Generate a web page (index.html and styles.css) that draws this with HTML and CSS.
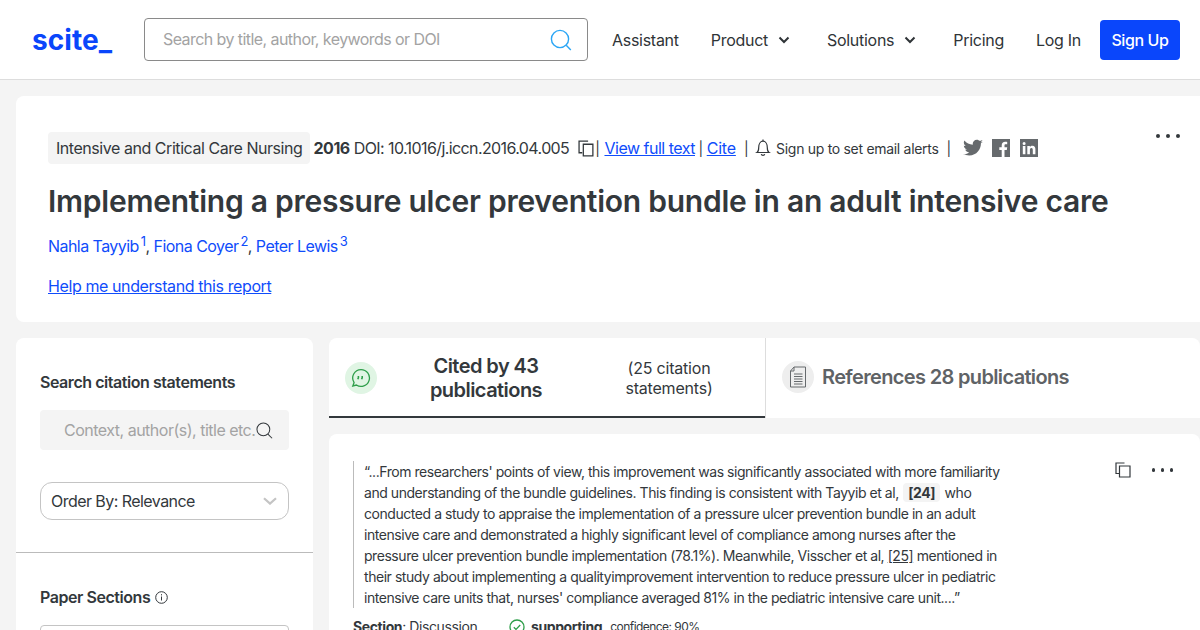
FILE: index.html
```html
<!DOCTYPE html>
<html lang="en">

<head>
    <meta charset="UTF-8">
    <title>Implementing a pressure ulcer prevention bundle in an adult intensive care</title>
    <link rel="stylesheet" href="styles.css">
</head>

<body>

    <header class="topbar">
        <a class="logo">scite_</a>
        <div class="search">
            <span class="search-text">Search by title, author, keywords or DOI</span>
            <svg class="search-icon" width="24" height="24" viewBox="0 0 24 24" fill="none" stroke="#2ba6f5" stroke-width="1.4">
                <circle cx="11" cy="11" r="8.6" />
                <path d="M17.2 17.2l4.6 4.8" />
            </svg>
        </div>
        <nav class="nav">
            <span class="nav-item">Assistant</span>
            <span class="nav-item">Product
                <svg class="chev" width="12" height="8" viewBox="0 0 12 8" fill="none" stroke="#2f3437" stroke-width="2">
                    <path d="M1.5 1.5L6 6l4.500-4.500" />
                </svg>
            </span>
            <span class="nav-item">Solutions
                <svg class="chev" width="12" height="8" viewBox="0 0 12 8" fill="none" stroke="#2f3437" stroke-width="2">
                    <path d="M1.500 1.500L6 6l4.500-4.500" />
                </svg>
            </span>
            <span class="nav-item">Pricing</span>
            <span class="nav-item nav-last">Log In</span>
            <span class="signup">Sign Up</span>
        </nav>
    </header>

    <section class="paper">
        <div class="meta">
            <span class="journal">Intensive and Critical Care Nursing</span>
            <b class="year">2016</b>
            <span class="doi">DOI: 10.1016/j.iccn.2016.04.005</span>
            <svg class="copy" width="17" height="17" viewBox="0 0 16 16" fill="none" stroke="#33383c" stroke-width="1.200">
                <path d="M9.500 1H1v11h3" />
                <path d="M5 4h9v11H5z" />
            </svg>
            <span class="sep sep-copy">|</span>
            <a class="link">View full text</a>
            <span class="sep">|</span>
            <a class="link link-cite">Cite</a>
            <span class="sep sep-wide">|</span>
            <svg class="bell" width="16" height="18" viewBox="0 0 16 18" fill="none" stroke="#33383c" stroke-width="1.200">
                <path d="M2 13.500c1.500-1 1.700-2.500 1.700-5C3.700 5 5.500 2.200 8 2.200s4.300 2.800 4.300 6.300c0 2.500.2 4 1.700 5z" />
                <path d="M8 .6v1.600M6.300 15.200c.3 1.600 3.100 1.600 3.400 0" />
            </svg>
            <span class="alerts">Sign up to set email alerts</span>
            <span class="sep sep-alerts">|</span>
            <svg class="social" width="20" height="18" viewBox="0 0 24 20" fill="#666a6d">
                <path d="M24 2.400c-.9.400-1.800.7-2.800.8 1-.6 1.800-1.600 2.200-2.700-1 .6-2 1-3.100 1.200C19.300.7 18 0 16.600 0c-2.700 0-4.900 2.200-4.900 4.900 0 .4 0 .8.100 1.100C7.700 5.800 4.100 3.900 1.700.9c-.4.700-.7 1.600-.7 2.500 0 1.700.9 3.200 2.200 4.100-.8 0-1.600-.2-2.200-.6v.1c0 2.400 1.700 4.400 3.900 4.800-.4.100-.8.200-1.300.2-.3 0-.6 0-.9-.1.600 2 2.400 3.400 4.600 3.400-1.700 1.300-3.800 2.100-6.100 2.100-.4 0-.8 0-1.200-.1C2.200 18.200 4.800 19 7.500 19c9.100 0 14-7.500 14-14v-.6c1-.7 1.800-1.600 2.500-2z" />
            </svg>
            <svg class="social social-fb" width="18" height="18" viewBox="0 0 18 18">
                <path fill="#666a6d" d="M0 0h18v18h-5.500v-7h2.300l.4-2.700h-2.700V6.600c0-.8.2-1.300 1.300-1.300h1.400V2.900c-.3 0-1.100-.1-2-.1-2.100 0-3.500 1.300-3.500 3.600v1.900H7.300V11h2.400v7H0z" />
            </svg>
            <svg class="social" width="18" height="18" viewBox="0 0 18 18">
                <path fill="#666a6d" fill-rule="evenodd" d="M0 0h18v18H0zM2.800 7v8.200h2.600V7zM4.100 2.900a1.500 1.500 0 100 3 1.500 1.500 0 000-3zM7.300 7v8.200h2.600v-4.100c0-1.100.2-2.100 1.500-2.100s1.400 1.200 1.400 2.200v4h2.600v-4.500c0-2.200-.5-3.900-3.100-3.900-1.200 0-2.100.7-2.400 1.300V7z" />
            </svg>
        </div>
        <span class="more more-paper"><i></i><i></i><i></i></span>
        <h1 class="title">Implementing a pressure ulcer prevention bundle in an adult intensive care</h1>
        <div class="authors">
            <a>Nahla Tayyib<sup>1</sup></a><span class="comma">,</span>
            <a>Fiona Coyer<sup>2</sup></a><span class="comma">,</span>
            <a>Peter Lewis<sup>3</sup></a>
        </div>
        <a class="link help">Help me understand this report</a>
    </section>

    <div class="columns">
        <aside class="sidebar">
            <div class="side-top">
                <h3 class="side-title">Search citation statements</h3>
                <div class="side-search">
                    <span>Context, author(s), title etc.</span>
                    <svg class="side-search-icon" width="17" height="17" viewBox="0 0 18 18" fill="none" stroke="#33383c" stroke-width="1.100">
                        <circle cx="7.800" cy="7.800" r="6.800" />
                        <path d="M12.600 12.800l4.400 4.400" />
                    </svg>
                </div>
                <div class="order">
                    <span>Order By: Relevance</span>
                    <svg width="14" height="8" viewBox="0 0 14 8" fill="none" stroke="#c4c4c4" stroke-width="2.200">
                        <path d="M1 1.200l6 5.400 6-5.400" />
                    </svg>
                </div>
            </div>
            <div class="side-bottom">
                <h3 class="side-title">Paper Sections
                    <svg class="info" width="13" height="13" viewBox="0 0 13 13" fill="none" stroke="#33383c">
                        <circle cx="6.500" cy="6.500" r="5.800" />
                        <path d="M6.500 5.500v4M6.500 3.200v1.200" />
                    </svg>
                </h3>
                <div class="side-box"></div>
            </div>
        </aside>

        <main class="results">
            <div class="tabs">
                <div class="tab tab-active">
                    <span class="tab-icon tab-icon-green">
                        <svg width="20" height="20" viewBox="0 0 20 20" fill="none" stroke="#2e9e4a" stroke-width="1.300">
                            <path d="M10 1.600a8.400 8.400 0 11-4.600 15.400L1.800 18l1.300-3.400A8.400 8.400 0 0110 1.600z" />
                            <path d="M7.400 8v1.800l-.6 1.400M11.200 8v1.800l-.6 1.400" stroke-width="1.600" />
                        </svg>
                    </span>
                    <span class="tab-title">Cited by 43 publications</span>
                    <span class="tab-sub">(25 citation statements)</span>
                </div>
                <div class="tab tab-refs">
                    <span class="tab-icon tab-icon-grey">
                        <svg width="18" height="22" viewBox="0 0 18 22" fill="none" stroke="#666a6d">
                            <path d="M5 1h11.500v20h-15V5z" />
                            <path d="M5 1v4H1.500M5 8h8.500M5 10.500h8.500M5 13h8.500M5 15.500h8.500M5 18h8.500" />
                        </svg>
                    </span>
                    <span class="refs-title">References 28 publications</span>
                </div>
            </div>

            <article class="citation">
                <div class="quote">
                    <p>“...From researchers' points of view, this improvement was significantly associated with more familiarity and understanding of the bundle guidelines. This finding is consistent with Tayyib et al, <b class="ref">[24]</b> who conducted a study to appraise the implementation of a pressure ulcer prevention bundle in an adult intensive care and demonstrated a highly significant level of compliance among nurses after the pressure ulcer prevention bundle implementation (78.1%). Meanwhile, Visscher et al, <u>[25]</u> mentioned in their study about implementing a qualityimprovement intervention to reduce pressure ulcer in pediatric intensive care units that, nurses' compliance averaged 81% in the pediatric intensive care unit....”</p>
                </div>
                <div class="cite-actions">
                    <svg width="16" height="16" viewBox="0 0 16 16" fill="none" stroke="#33383c" stroke-width="1.200">
                        <path d="M9.500 1H1v10.500h3" />
                        <path d="M4.500 4h10.500v11H4.500z" />
                    </svg>
                    <span class="more more-small"><i></i><i></i><i></i></span>
                </div>
                <div class="cite-foot">
                    <span class="section"><b>Section</b>: Discussion</span>
                    <svg class="check" width="16" height="16" viewBox="0 0 16 16" fill="none" stroke="#2e9e4a" stroke-width="1.300">
                        <circle cx="8" cy="8" r="7" />
                        <path d="M4.800 8.200l2.200 2.200 4.200-4.400" />
                    </svg>
                    <b class="supporting">supporting</b>
                    <span class="confidence">confidence: 90%</span>
                </div>
            </article>
        </main>
    </div>

</body>

</html>
```

FILE: styles.css
```css
* {
    margin: 0;
    padding: 0;
    box-sizing: border-box;
}

body {
    background: #f4f4f4;
    font-family: Inter, 'Liberation Sans', sans-serif;
    color: #33383c;
    height: 630px;
    overflow: hidden;
}

a {
    color: #0f4cfb;
}

/* Kopfzeile */
.topbar {
    display: flex;
    align-items: center;
    height: 80px;
    padding: 0 20px 0 32px;
    background: #fff;
    border-bottom: 1px solid #ddd;
}

.logo {
    flex: none;
    width: 112px;
    font-size: 28px;
    font-weight: 700;
    letter-spacing: 0.05px;
    color: #0a46fb;
}

.search {
    display: flex;
    flex: none;
    align-items: center;
    justify-content: space-between;
    width: 444px;
    height: 43px;
    padding: 0 14px 0 18px;
    border: 1px solid #8a8a8a;
    border-radius: 4px;
}

.search-text {
    margin-bottom: 2px;
    font-size: 16px;
    letter-spacing: -0.57px;
    color: #a3a3a3;
}

.nav {
    display: flex;
    flex: 1;
    align-items: center;
    margin-left: 24px;
    font-size: 16px;
    letter-spacing: -0.28px;
    color: #2f3437;
}

.nav-item {
    display: flex;
    align-items: center;
    margin-right: 32px;
    white-space: nowrap;
}

.nav-last {
    margin-right: 0;
}

.chev {
    margin-left: 10px;
    margin-right: 5px;
}

.signup {
    width: 80px;
    height: 40px;
    margin-left: auto;
    line-height: 40px;
    text-align: center;
    border-radius: 4px;
    background: #0a46fb;
    color: #fff;
    font-weight: 500;
    letter-spacing: -0.4px;
}

/* Artikelkarte */
.paper {
    position: relative;
    height: 226px;
    margin: 16px 0 16px 16px;
    padding: 36px 32px 0;
    background: #fff;
    border-radius: 8px 0 0 8px;
}

.meta {
    display: flex;
    align-items: center;
    height: 32px;
    font-size: 16px;
    letter-spacing: -0.45px;
    white-space: nowrap;
}

.journal {
    padding: 0 8px;
    height: 32px;
    line-height: 32px;
    margin-right: 3px;
    background: #f4f4f4;
    border-radius: 4px;
}

.year {
    margin-right: 4px;
}

.doi {
    letter-spacing: -0.6px;
}

.copy {
    flex: none;
    margin-left: 9px;
}

.sep {
    margin: 0 4px 0 3.500px;
    font-size: 14px;
}

.sep-copy {
    margin: 0 5px 0 0;
}

.sep-wide {
    margin: 0 7px 0 8px;
}

.alerts {
    margin-left: 5px;
    font-size: 14px;
    letter-spacing: -0.3px;
}

.sep-alerts {
    margin: 0 12px 0 8px;
}

.social {
    flex: none;
    margin-right: 9px;
}

.social-fb {
    margin-right: 10px;
}

.link {
    text-decoration: underline;
    letter-spacing: -0.5px;
}

.link-cite {
    letter-spacing: -0.2px;
}

.more {
    display: inline-flex;
    gap: 6px;
}

.more i {
    width: 4px;
    height: 4px;
    border-radius: 50%;
    background: #33383c;
}

.more-small {
    gap: 5.500px;
}

.more-small i {
    width: 3.500px;
    height: 3.500px;
}

.more-paper {
    position: absolute;
    top: 38px;
    right: 20px;
}

.title {
    margin-top: 17px;
    font-size: 30px;
    line-height: 40px;
    font-weight: 600;
    letter-spacing: -0.24px;
}

.authors {
    margin-top: 12px;
    font-size: 16px;
    letter-spacing: -0.55px;
}

.authors sup {
    font-size: 13px;
    margin-left: 2px;
}

.comma {
    color: #33383c;
}

.help {
    display: inline-block;
    margin-top: 20px;
    font-size: 16px;
    letter-spacing: -0.4px;
}

/* Spalten */
.columns {
    display: flex;
    gap: 16px;
    margin-left: 16px;
}

.sidebar {
    flex: none;
    width: 297px;
    background: #fff;
    border-radius: 8px 8px 0 0;
    height: 400px;
}

.side-top {
    height: 215px;
    padding: 35px 24px 0;
    border-bottom: 1px solid #bbb;
}

.side-title {
    display: flex;
    align-items: center;
    gap: 5px;
    font-size: 16px;
    line-height: 18px;
    font-weight: 600;
    letter-spacing: -0.45px;
}

.side-search {
    display: flex;
    align-items: center;
    justify-content: space-between;
    height: 40px;
    margin-top: 19px;
    padding: 0 16px 0 24px;
    background: #f4f4f4;
    border-radius: 4px;
    font-size: 16px;
    letter-spacing: -0.5px;
    color: #a3a3a3;
    white-space: nowrap;
}

.side-search-icon {
    flex: none;
}

.order {
    display: flex;
    align-items: center;
    justify-content: space-between;
    height: 38px;
    margin-top: 32px;
    padding: 0 11px 0 10px;
    border: 1px solid #c4c4c4;
    border-radius: 12px;
    font-size: 16px;
    letter-spacing: -0.55px;
}

.side-bottom {
    padding: 35px 24px 0;
}

.side-box {
    height: 40px;
    margin-top: 19px;
    border: 1px solid #c4c4c4;
    border-radius: 4px;
}

.results {
    flex: 1;
    min-width: 0;
}

.tabs {
    display: flex;
    height: 80px;
    background: #fff;
    border-radius: 8px 8px 0 0;
}

.tab {
    display: flex;
    align-items: center;
}

.tab-active {
    width: 436px;
    padding: 2px 0 0 16px;
    border-bottom: 2px solid #33383c;
}

.tab-refs {
    flex: 1;
    padding: 0 0 2px 16px;
    border-left: 1px solid #ddd;
}

.tab-icon {
    display: flex;
    align-items: center;
    justify-content: center;
    flex: none;
    width: 32px;
    height: 32px;
    border-radius: 50%;
}

.tab-icon-green {
    background: #e0f5e4;
}

.tab-icon-grey {
    background: #eee;
}

.tab-title {
    width: 180px;
    margin-left: 19px;
    font-size: 20px;
    line-height: 24px;
    font-weight: 600;
    letter-spacing: -0.55px;
    text-align: center;
}

.tab-sub {
    width: 130px;
    margin-left: 28px;
    font-size: 16px;
    line-height: 20px;
    text-align: center;
    letter-spacing: -0.2px;
}

.refs-title {
    margin-left: 8px;
    font-size: 20px;
    font-weight: 600;
    letter-spacing: -0.65px;
    color: #5f6366;
}

.citation {
    position: relative;
    height: 300px;
    margin-top: 16px;
    padding: 27px 24px 0;
    background: #fff;
    border-radius: 8px 8px 0 0;
}

.quote {
    width: 660px;
    padding-left: 10px;
    border-left: 1px solid #bbb;
    font-size: 14px;
    line-height: 21px;
    letter-spacing: -0.45px;
}

.ref {
    display: inline-block;
    padding: 0 5px;
    margin: 0 1px;
    line-height: 19px;
    background: #f4f4f4;
    border-radius: 4px;
    font-weight: 700;
}

.cite-actions {
    position: absolute;
    top: 28px;
    right: 27px;
    display: flex;
    align-items: center;
    gap: 21px;
}

.cite-foot {
    display: flex;
    align-items: center;
    margin-top: 10px;
    font-size: 14px;
    letter-spacing: -0.4px;
}

.section {
    width: 156px;
}

.check {
    flex: none;
}

.supporting {
    margin-left: 6px;
}

.confidence {
    margin-left: 8px;
    font-size: 12px;
    letter-spacing: -0.55px;
}
```
